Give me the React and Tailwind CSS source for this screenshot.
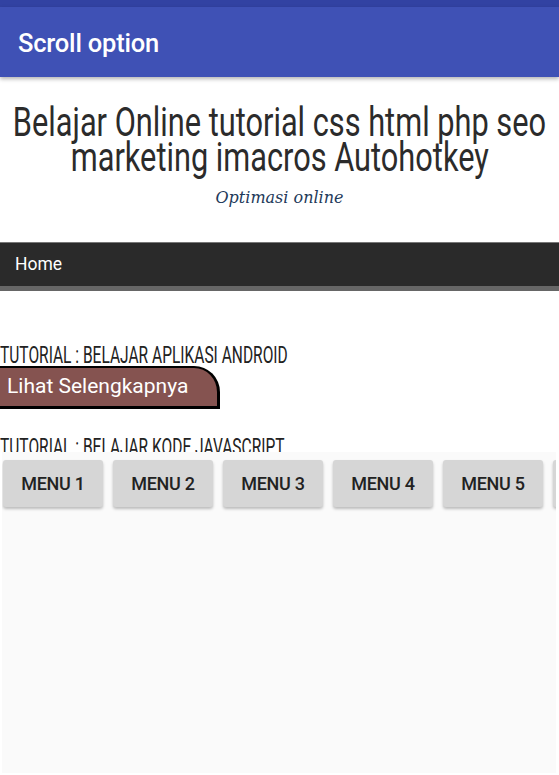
import React from 'react';

const menus = ['MENU 1', 'MENU 2', 'MENU 3', 'MENU 4', 'MENU 5', 'MENU 6'];

// Oswald-like condensed headline: Roboto squeezed horizontally
function Condensed({ children, className }) {
  return (
    <div className={`flex justify-center whitespace-nowrap ${className}`}>
      <span className="inline-block scale-x-[0.75] origin-center">{children}</span>
    </div>
  );
}

function PostTitle({ children, className }) {
  return (
    <div className={`whitespace-nowrap text-[#222] text-[23px] uppercase ${className}`}>
      <span className="inline-block scale-x-[0.675] origin-left">{children}</span>
    </div>
  );
}

export default function App() {
  return (
    <div className="w-[559px] h-[775px] overflow-hidden bg-white flex flex-col" style={{ fontFamily: 'Roboto, "Liberation Sans", sans-serif' }}>
      {/* status bar, cut off */}
      <div className="h-[7px] bg-[#3242a2] shrink-0" />

      {/* app bar */}
      <div className="h-[70px] bg-[#3f51b5] flex items-center pt-[3px] px-[18px] shrink-0 shadow-[0_2px_4px_rgba(0,0,0,0.3)] relative z-10">
        <span className="text-white text-[25.5px] font-medium tracking-[-0.2px]">Scroll option</span>
      </div>

      {/* webview */}
      <div className="h-[375px] shrink-0 overflow-hidden bg-white">
        <div className="pt-[28px] text-[#2b2b2b] text-[41px] leading-[35px]">
          <Condensed>Belajar Online tutorial css html php seo</Condensed>
          <Condensed>marketing imacros Autohotkey</Condensed>
        </div>
        <div className="mt-[13px] text-center italic text-[16px] leading-[20px] text-[#1e3a5a]" style={{ fontFamily: '"DejaVu Serif", "Liberation Serif", serif' }}>
          Optimasi online
        </div>

        <div className="mt-[34px] border-t border-[#777] bg-[#2a2a2a] h-[49px] border-b-[5px] border-b-[#666] flex items-center px-[15px]">
          <span className="text-white text-[17.5px]">Home</span>
        </div>

        <PostTitle className="mt-[54px] leading-[21px]">Tutorial : Belajar Aplikasi Android</PostTitle>
        <div className="w-[220px] h-[43px] bg-[#855350] border-t-2 border-r-[3px] border-b-[3px] border-black rounded-tr-[26px] flex items-center pl-[7px]">
          <span className="text-white text-[21px]">Lihat Selengkapnya</span>
        </div>
        <PostTitle className="mt-[27px] leading-[24px]">Tutorial : Belajar Kode Javascript</PostTitle>
      </div>

      {/* scroll panel */}
      <div className="ml-[2px] mr-[3px] h-[321px] bg-[#fafafa] overflow-hidden">
        <div className="flex gap-[10px] pt-[8px] pl-[1px]">
          {menus.map((m) => (
            <div key={m} className="w-[100px] h-[47px] shrink-0 rounded-[3px] bg-[#d6d6d6] shadow-[0_2px_3px_rgba(0,0,0,0.25)] flex items-center justify-center text-[#222] text-[18px] font-medium tracking-[-0.3px]">
              {m}
            </div>
          ))}
        </div>
      </div>
    </div>
  );
}
